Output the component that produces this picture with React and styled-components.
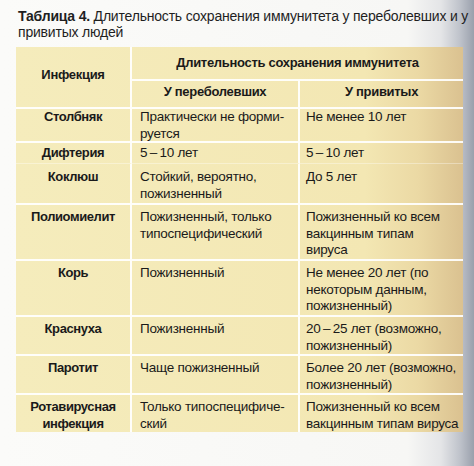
import React from 'react';
import styled, { createGlobalStyle } from 'styled-components';

const GlobalStyle = createGlobalStyle`
  html, body {
    margin: 0;
    padding: 0;
  }

  body {
    width: 474px;
    height: 466px;
    overflow: hidden;
    background: linear-gradient(
      90deg,
      #fbfbf9 0%,
      #f7f7f5 86%,
      #e4e5e7 93%,
      #bfc3cb 97%,
      #9aa0ac 100%
    );
    color: #1a1a1a;
    font-family: 'Liberation Sans', Arial, sans-serif;
  }
`;

const Page = styled.div`
  padding: 8px 0 0 18px;
`;

const Caption = styled.div`
  font-size: 14px;
  line-height: 16px;
  letter-spacing: -0.2px;
  color: #1f1f1f;
  white-space: nowrap;

  b {
    font-weight: 700;
  }
`;

const Table = styled.div`
  display: grid;
  grid-template-columns: 116px 168px 163px;
  grid-template-rows: 34px 28px 34px 21px 41px 56px 56px 39px 39px 37px;
  width: 447px;
  margin: 7px 0 0 -2px;
  background: linear-gradient(
    90deg,
    #f5ecbc 0%,
    #f3e7b3 78%,
    #ebd9a4 90%,
    #dac190 100%
  );
  font-size: 13.5px;
  line-height: 16.5px;
  letter-spacing: -0.25px;
`;

const Cell = styled.div`
  box-sizing: border-box;
  white-space: nowrap;
  border-right: ${(p) => (p.$last ? '0' : '2px solid rgba(255, 255, 255, 0.92)')};
  border-bottom: ${(p) =>
    p.$bottom
      ? '0'
      : p.$faint
      ? '1px solid rgba(255, 255, 255, 0.35)'
      : '2px solid rgba(255, 255, 255, 0.92)'};
  padding: ${(p) => p.$pad ?? 3}px ${(p) => (p.$col === 2 ? 8 : 6)}px 0;
  font-size: ${(p) => (p.$col === 1 ? '13px' : 'inherit')};
  letter-spacing: ${(p) => (p.$col === 1 ? '-0.4px' : 'inherit')};
  font-weight: ${(p) => (p.$col === 1 ? 700 : 400)};
  text-align: ${(p) => (p.$col === 1 ? 'center' : 'left')};
`;

const HeadCell = styled.div`
  box-sizing: border-box;
  display: flex;
  align-items: center;
  justify-content: center;
  padding-bottom: ${(p) => p.$lift ?? 0}px;
  font-size: 13px;
  letter-spacing: -0.3px;
  font-weight: 700;
  white-space: nowrap;
  border-right: ${(p) => (p.$last ? '0' : '2px solid rgba(255, 255, 255, 0.92)')};
  border-bottom: 2px solid rgba(255, 255, 255, 0.92);
  grid-row: ${(p) => p.$row || 'auto'};
  grid-column: ${(p) => p.$column || 'auto'};
`;

const rows = [
  {
    name: ['Столбняк'],
    ill: ['Практически не форми-', 'руется'],
    vac: ['Не менее 10 лет'],
    pad: 0,
  },
  {
    name: ['Дифтерия'],
    ill: ['5\u2009–\u200910 лет'],
    vac: ['5\u2009–\u200910 лет'],
    pad: 2,
    faint: true,
  },
  {
    name: ['Коклюш'],
    ill: ['Стойкий, вероятно,', 'пожизненный'],
    vac: ['До 5 лет'],
    pad: 5,
  },
  {
    name: ['Полиомиелит'],
    ill: ['Пожизненный, только', 'типоспецифический'],
    vac: ['Пожизненный ко всем', 'вакцинным типам', 'вируса'],
    pad: 4,
  },
  {
    name: ['Корь'],
    ill: ['Пожизненный'],
    vac: ['Не менее 20 лет (по', 'некоторым данным,', 'пожизненный)'],
    pad: 4,
  },
  {
    name: ['Краснуха'],
    ill: ['Пожизненный'],
    vac: ['20\u2009–\u200925 лет (возможно,', 'пожизненный)'],
    pad: 4,
  },
  {
    name: ['Паротит'],
    ill: ['Чаще пожизненный'],
    vac: ['Более 20 лет (возможно,', 'пожизненный)'],
    pad: 4,
  },
  {
    name: ['Ротавирусная', 'инфекция'],
    ill: ['Только типоспецифиче-', 'ский'],
    vac: ['Пожизненный ко всем', 'вакцинным типам вируса'],
    pad: 4,
  },
];

function Lines({ items }) {
  return items.map((line, i) => (
    <React.Fragment key={i}>
      {i > 0 && <br />}
      {line}
    </React.Fragment>
  ));
}

export default function App() {
  return (
    <Page>
      <GlobalStyle />
      <Caption>
        <b>Таблица 4.</b> Длительность сохранения иммунитета у переболевших и у
        <br />
        привитых людей
      </Caption>

      <Table>
        <HeadCell $row="1 / span 2" $column="1" $lift={4}>
          Инфекция
        </HeadCell>
        <HeadCell $row="1" $column="2 / span 2" $last>
          Длительность сохранения иммунитета
        </HeadCell>
        <HeadCell $row="2" $column="2" $lift={4}>
          У переболевших
        </HeadCell>
        <HeadCell $row="2" $column="3" $last $lift={4}>
          У привитых
        </HeadCell>

        {rows.map((row, i) => {
          const bottom = i === rows.length - 1;
          return (
            <React.Fragment key={row.name[0]}>
              <Cell $col={1} $pad={row.pad} $faint={row.faint} $bottom={bottom}>
                <Lines items={row.name} />
              </Cell>
              <Cell $col={2} $pad={row.pad} $faint={row.faint} $bottom={bottom}>
                <Lines items={row.ill} />
              </Cell>
              <Cell $col={3} $pad={row.pad} $faint={row.faint} $bottom={bottom} $last>
                <Lines items={row.vac} />
              </Cell>
            </React.Fragment>
          );
        })}
      </Table>
    </Page>
  );
}
